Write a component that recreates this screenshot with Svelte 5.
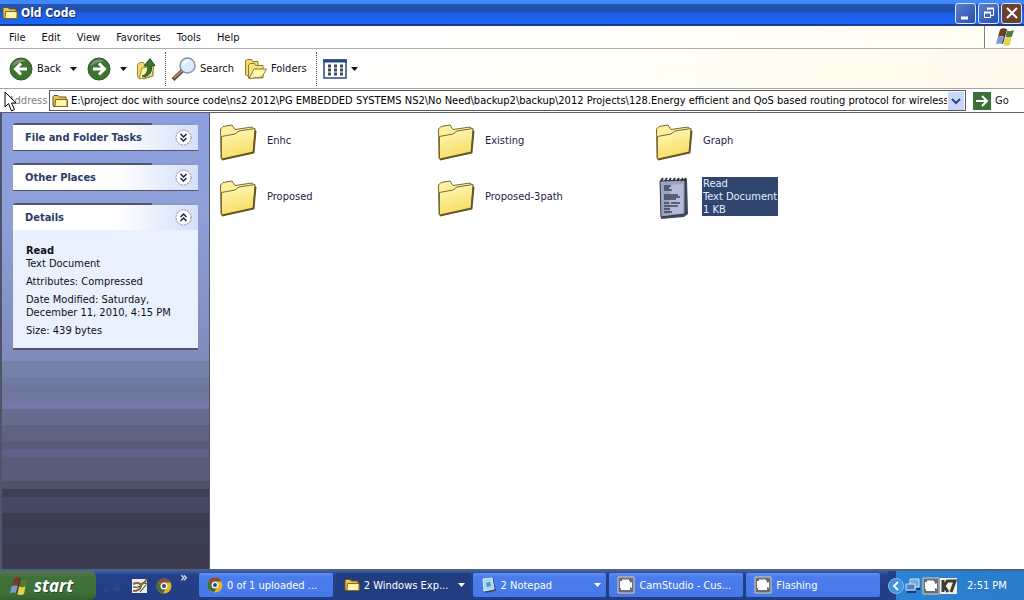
<script>
	const menus = ['File', 'Edit', 'View', 'Favorites', 'Tools', 'Help'];

	const files = [
		{ name: 'Enhc' },
		{ name: 'Existing' },
		{ name: 'Graph' },
		{ name: 'Proposed' },
		{ name: 'Proposed-3path' },
		{ name: 'Read', type: 'Text Document', size: '1 KB' }
	];

	const tasks = [
		{ icon: 'chrome', label: '0 of 1 uploaded ...' },
		{ icon: 'folder', label: '2 Windows Exp...', group: true, active: true },
		{ icon: 'notepad', label: '2 Notepad', group: true },
		{ icon: 'camera', label: 'CamStudio - Cus...' },
		{ icon: 'camera', label: 'Flashing' }
	];

	let selected = $state('Read');
	let address = $state(
		'E:\\project doc with source code\\ns2 2012\\PG EMBEDDED SYSTEMS NS2\\No Need\\backup2\\backup\\2012 Projects\\128.Energy efficient and QoS based routing protocol for wireless sensor networks\\Old Code'
	);
</script>

{#snippet smallFolder(size)}
	<svg width={size} height={size} viewBox="0 0 16 16" aria-hidden="true">
		<path d="M1 13V3.5L2 2.5h4l1.5 1.5H14v3h1.5v6.5H2z" fill="#e9c64c" stroke="#6b5718" />
		<path d="M3.5 6.5H15v7H3z" fill="#fff3a0" stroke="#806b20" />
		<path d="M4.5 9h9.5" stroke="#fffbd8" />
	</svg>
{/snippet}

{#snippet chrome()}
	<svg width="16" height="16" viewBox="0 0 16 16" aria-hidden="true">
		<circle cx="8" cy="8" r="7.5" fill="#e3b42c" />
		<path d="M8 8L1.5 4A7.5 7.5 0 0 1 14.5 4.5H8z" fill="#8f4a30" />
		<path d="M8 8L1.5 4a7.5 7.5 0 0 0 5.5 11.4L10.5 10z" fill="#4c6c3c" />
		<circle cx="8" cy="8" r="3.5" fill="#f3f2e6" />
		<circle cx="8" cy="8" r="2" fill="#2c4a88" />
	</svg>
{/snippet}

{#snippet flag(size)}
	<svg width={size} height={size} viewBox="0 0 20 20" aria-hidden="true">
		<path d="M5 2.5q3-2 6.5-.5L9.5 10Q6.5 8.5 3 10z" fill="#7a3a28" />
		<path d="M12 3.5q3 1.5 7-.5L17 9.5q-3 1.5-6.5.5z" fill="#567a36" />
		<path d="M2.5 10.5q3.5-1.5 6.5-.5L7.5 17q-3-1-6.5.5z" fill="#7f9ad0" />
		<path d="M10 10.5q3 1.5 6.5 0L15 18q-3 1.5-6.5.5z" fill="#e8d048" />
		<path d="M11.5 2L7.5 17" stroke="#38302c" />
	</svg>
{/snippet}

{#snippet arrow(flip)}
	<svg width="24" height="24" viewBox="0 0 24 24" aria-hidden="true">
		<circle cx="12" cy="12" r="11" fill="#3c7430" stroke="#2e5c26" />
		<path d="M3 9a9.5 9.5 0 0 1 14-5q-7 1-14 5z" fill="#84907e" />
		<path
			d={flip ? 'M6 12h11M12 6.5l5.5 5.5-5.5 5.5' : 'M18 12H7M12 6.5L6.5 12l5.5 5.5'}
			fill="none"
			stroke="#fff"
			stroke-width="3"
		/>
	</svg>
{/snippet}

{#snippet caret()}
	<svg width="7" height="4" viewBox="0 0 7 4" aria-hidden="true">
		<path d="M0 0h7L3.5 4z" fill="currentColor" />
	</svg>
{/snippet}

{#snippet chevrons(up)}
	<svg width="17" height="17" viewBox="0 0 17 17" aria-hidden="true">
		<circle cx="8.5" cy="8.5" r="7.5" fill="#fff" stroke="#85899c" stroke-dasharray="2 1" />
		<path
			d={up ? 'M5.5 8l3-3 3 3M5.5 12l3-3 3 3' : 'M5.5 5l3 3 3-3M5.5 9l3 3 3-3'}
			fill="none"
			stroke="#1c2448"
			stroke-width="1.5"
		/>
	</svg>
{/snippet}

<div class="desktop">
	<header class="titlebar">
		{@render smallFolder(16)}
		<h1>Old Code</h1>
		<div class="window-buttons">
			<button aria-label="Minimize">
				<svg width="20" height="20" viewBox="0 0 20 20"><path d="M5 15h7" stroke="#fff" stroke-width="3" /></svg>
			</button>
			<button aria-label="Restore">
				<svg width="20" height="20" viewBox="0 0 20 20" fill="none" stroke="#fff">
					<path d="M8.5 7V5.5h6v7H12" /><path d="M8 5.5h7" stroke-width="2" />
					<path d="M5.5 9.5h6v5h-6z" /><path d="M5 9.5h7" stroke-width="2" />
				</svg>
			</button>
			<button class="close" aria-label="Close">
				<svg width="20" height="20" viewBox="0 0 20 20"><path d="M5 5l10 10M15 5L5 15" stroke="#fff" stroke-width="2" /></svg>
			</button>
		</div>
	</header>

	<div class="menubar">
		<nav>
			{#each menus as menu}
				<button>{menu}</button>
			{/each}
		</nav>
		<div class="brand">{@render flag(20)}</div>
	</div>

	<div class="toolbar">
		<button class="tool">{@render arrow(false)} Back</button>
		<button class="drop" aria-label="Back history">{@render caret()}</button>
		<button class="tool forward" aria-label="Forward">{@render arrow(true)}</button>
		<button class="drop" aria-label="Forward history">{@render caret()}</button>
		<button class="tool up" aria-label="Up">
			<svg width="20" height="24" viewBox="0 0 20 24">
				<path d="M1.5 20V7.5l2-2h4l1 2h9L17 19l-9 3z" fill="#f1d768" stroke="#a08a34" />
				<path d="M3 22L6 11l12-2-2 10z" fill="#fff4a4" stroke="#a08a34" />
				<path d="M6 19q6-1 6-10H8l6-7.5 5 7h-3q0 10-7 11z" fill="#3f7136" stroke="#2a5924" />
			</svg>
		</button>
		<span class="separator"></span>
		<button class="tool">
			<svg width="24" height="24" viewBox="0 0 24 24">
				<path d="M1 22.5L11 13" stroke="#6a4a34" stroke-width="4" />
				<path d="M2 21L10.5 13" stroke="#c09a70" stroke-width="1.5" />
				<circle cx="15.5" cy="8.5" r="7.5" fill="#dcecfb" stroke="#8793ab" stroke-width="1.5" />
				<path d="M11 8q1-4 5-4" fill="none" stroke="#fff" stroke-width="2" />
			</svg>
			Search
		</button>
		<button class="tool folders">
			<svg width="23" height="22" viewBox="0 0 23 22">
				<path d="M1.5 17V2.5l2-1h4l1 2H14V15l-8 4z" fill="#f1dc74" stroke="#8d7b30" />
				<path d="M4.5 20V7l2-1.5h4l1 2H19V20z" fill="#f6e27c" stroke="#8d7b30" />
				<path d="M5 20.5L10 11h12.5L18 19z" fill="#fff5ae" stroke="#8d7b30" />
			</svg>
			Folders
		</button>
		<span class="separator"></span>
		<button class="tool" aria-label="Views">
			<svg width="24" height="20" viewBox="0 0 24 20">
				<path d="M1 1h22v18H1z" fill="#fff" stroke="#24468c" stroke-width="1.5" />
				<path d="M0 2h24" stroke="#24468c" stroke-width="3" />
				<path
					d="M5 7h3M11 7h3M17 7h3M5 11h3M11 11h3M17 11h3M5 15h3M11 15h3M17 15h3"
					stroke="#414a5c"
					stroke-width="3"
				/>
			</svg>
			{@render caret()}
		</button>
	</div>

	<form class="address-bar" onsubmit={(e) => e.preventDefault()}>
		<label for="address">Address</label>
		<div class="address-box">
			{@render smallFolder(16)}
			<input id="address" type="text" spellcheck="false" bind:value={address} />
			<button type="button" aria-label="Show addresses">
				<svg width="16" height="18" viewBox="0 0 16 18"><path d="M4 7l4 4 4-4" fill="none" stroke="#2e4478" stroke-width="2" /></svg>
			</button>
		</div>
		<button class="go">
			<svg width="18" height="18" viewBox="0 0 18 18">
				<path d="M0 0h18v18H0z" fill="#3c7038" />
				<path d="M3 9h11M9 4l5 5-5 5" fill="none" stroke="#fff" stroke-width="2" />
			</svg>
			Go
		</button>
	</form>

	<main>
		<aside>
			<section>
				<h2>File and Folder Tasks <button aria-label="Expand tasks">{@render chevrons(false)}</button></h2>
			</section>
			<section>
				<h2>Other Places <button aria-label="Expand places">{@render chevrons(false)}</button></h2>
			</section>
			<section>
				<h2>Details <button aria-label="Collapse details">{@render chevrons(true)}</button></h2>
				<div class="details">
					<p><strong>Read</strong><br />Text Document</p>
					<p>Attributes: Compressed</p>
					<p>Date Modified: Saturday, December 11, 2010, 4:15 PM</p>
					<p>Size: 439 bytes</p>
				</div>
			</section>
		</aside>

		<div class="files">
			{#each files as file}
				<button class="file" class:selected={selected === file.name} onclick={() => (selected = file.name)}>
					{#if file.type}
						<svg width="38" height="44" viewBox="0 0 38 44" aria-hidden="true">
							<path d="M5 5l27-2 1 35-4 3-23 2z" fill="#444a5c" />
							<path d="M5 5l25-1v34L6 41z" fill="#9aa4c0" stroke="#333849" />
							<path d="M15 9l13-1v29l-13 1z" fill="#b3bdd8" />
							<path
								d="M6 5l2-3m2 3l2-3m2 3l2-3m2 3l2-3m2 3l2-3m2 3l2-3m1 3l2-3"
								stroke="#30343f"
								stroke-width="2"
							/>
							<path
								d="M9 10h7M9 12h5M9 14h8M9 19h14M9 21h16M9 23h12M9 27h5M16 27h9M9 30h14M9 33h6M9 36h8"
								stroke="#3b4258"
								stroke-width="1.5"
							/>
						</svg>
					{:else}
						<svg width="38" height="38" viewBox="0 0 38 38" aria-hidden="true">
							<defs>
								<linearGradient id="folder-front" x1="0" y1="0" x2="0.3" y2="1">
									<stop offset="0" stop-color="#fffbc0" />
									<stop offset="1" stop-color="#f8dc62" />
								</linearGradient>
							</defs>
							<path d="M2 35L1.5 6 4 3.5 13 2l3 4.500L33 4l3.500 3L34 30 3 36.500z" fill="#fff0a0" stroke="#756a34" />
							<path d="M2.5 36V13.500L16 11l4-3 16-2.500-1.500 24L3 36.500z" fill="url(#folder-front)" stroke="#756a34" />
							<path d="M3 36.5l31.500-7L36.500 8" fill="none" stroke="#625828" stroke-width="2" />
						</svg>
					{/if}
					<span class="label">
						{file.name}
						{#if file.type}<br />{file.type}<br />{file.size}{/if}
					</span>
				</button>
			{/each}
		</div>
	</main>

	<footer>
		<button class="start">{@render flag(20)} start</button>
		<div class="quick-launch">
			<button class="dim" aria-label="Show desktop">
				<svg width="20" height="16" viewBox="0 0 20 16"><path d="M1 14l5-4v4zM9 13l7-10 2 10z" fill="#264a84" /></svg>
			</button>
			<button aria-label="Paint">
				<svg width="16" height="16" viewBox="0 0 16 16">
					<path d="M0 1h15v14H0z" fill="#f0eee4" />
					<path d="M1 6q5-2 7 0t7-5M1 13q7 0 8-5t6-2" fill="none" stroke="#7c6838" stroke-width="2" />
					<path d="M1 9q5 1 7-1M8 14l6-7" fill="none" stroke="#2c2a2c" />
				</svg>
			</button>
			<button aria-label="Chrome">{@render chrome()}</button>
			<button class="more" aria-label="More">»</button>
		</div>
		<div class="tasks">
			{#each tasks as task}
				<button class="task" class:active={task.active}>
					{#if task.icon === 'chrome'}
						{@render chrome()}
					{:else if task.icon === 'folder'}
						{@render smallFolder(16)}
					{:else if task.icon === 'notepad'}
						<svg width="16" height="16" viewBox="0 0 16 16" aria-hidden="true">
							<path d="M3 2l9-1 3 13-11 2z" fill="#394864" />
							<path d="M2 2l9-1 2 11-10 2z" fill="#a9d6ee" stroke="#dce9f2" />
							<path d="M5 6l4-1 1 4-4 1z" fill="#4a9ac8" />
						</svg>
					{:else}
						<svg width="18" height="18" viewBox="0 0 18 18" aria-hidden="true">
							<path d="M1 1h16v16H1z" fill="#696d72" stroke="#d5d2c6" />
							<path d="M3 5h10v2l2-1v6l-2-1v3H4v-2H3z" fill="#fff" />
							<path d="M5 4.5h7" stroke="#fff" stroke-width="2" />
						</svg>
					{/if}
					<span>{task.label}</span>
					{#if task.group}{@render caret()}{/if}
				</button>
			{/each}
		</div>
		<div class="tray">
			<button aria-label="Show hidden icons">
				<svg width="16" height="16" viewBox="0 0 16 16">
					<circle cx="8" cy="8" r="7.5" fill="#3f93e4" stroke="#85bcf0" />
					<path d="M10 4L6 8l4 4" fill="none" stroke="#fff" stroke-width="2" />
				</svg>
			</button>
			<svg width="18" height="18" viewBox="0 0 18 18" aria-hidden="true">
				<path d="M6 2h9v8H6z" fill="#6faae4" stroke="#d4e2f2" />
				<path d="M2 7h9v6H2z" fill="#4c82cc" stroke="#d4e2f2" />
				<path d="M3 15h9M12 12h4" stroke="#20386c" stroke-width="2" />
			</svg>
			<svg width="18" height="18" viewBox="0 0 18 18" aria-hidden="true">
				<path d="M1 1h16v16H1z" fill="#696d72" stroke="#d5d2c6" />
				<path d="M3 5h10v2l2-1v6l-2-1v3H4v-2H3z" fill="#fff" />
				<path d="M5 4.5h7" stroke="#fff" stroke-width="2" />
			</svg>
			<svg width="17" height="18" viewBox="0 0 17 18" aria-hidden="true">
				<path d="M0 1h17v16H0z" fill="#f2f0e4" />
				<path d="M3 3v12M8 3L4 9l4 6M8 4h7l-4 11" fill="none" stroke="#403c34" stroke-width="3" />
			</svg>
			<time>2:51 PM</time>
		</div>
	</footer>

	<svg class="pointer" width="14" height="22" viewBox="0 0 14 22" aria-hidden="true">
		<path d="M1 1v15l3.500-3.500L7.500 20l3-1.500L7.500 12H12z" fill="#fff" stroke="#000" />
	</svg>
</div>

<style>
	:global(body) {
		margin: 0;
	}

	.desktop {
		position: relative;
		display: flex;
		flex-direction: column;
		min-height: 100vh;
		font: 11px/13px 'DejaVu Sans Condensed', Tahoma, sans-serif;
		color: #101018;
		background: #fff;
	}

	button {
		display: flex;
		align-items: center;
		padding: 0;
		border: 0;
		background: none;
		font: inherit;
		color: inherit;
		white-space: nowrap;
	}

	svg {
		display: block;
		flex: none;
	}

	/* title bar */
	.titlebar {
		display: flex;
		align-items: center;
		gap: 3px;
		box-sizing: border-box;
		height: 26px;
		padding: 2px 2px 0;
		border-bottom: 2px solid #1b3c84;
		background: linear-gradient(#3f89fb 4px, #2457b4 4px, #2250a8 11px, #1d5de4 13px, #1c66fc 24px);
	}

	h1 {
		flex: 1;
		margin: 0;
		font-size: 12px;
		line-height: 16px;
		color: #fff;
		text-shadow: 1px 1px #102860;
	}

	.window-buttons {
		display: flex;
		gap: 2px;
	}

	.window-buttons button {
		box-sizing: border-box;
		width: 21px;
		height: 21px;
		justify-content: center;
		border: 1px solid #dce6f8;
		border-radius: 3px;
		background: linear-gradient(135deg, #5a80cc, #2850ac);
	}

	.window-buttons .close {
		background: #6c4030;
	}

	/* menu bar */
	.menubar {
		display: flex;
		height: 22px;
		border-bottom: 1px solid #b0b0b0;
		background: linear-gradient(90deg, #fff 40%, #fffef2);
	}

	nav {
		display: flex;
		flex: 1;
		gap: 16px;
		padding-left: 9px;
	}

	.brand {
		display: flex;
		align-items: center;
		justify-content: center;
		width: 39px;
		border-left: 1px solid #808080;
		background: #fff;
	}

	/* toolbar */
	.toolbar {
		display: flex;
		align-items: center;
		height: 39px;
		padding-left: 9px;
		border-bottom: 1px solid #a4a4a4;
		background: linear-gradient(90deg, #fff 30%, #fffdf0 80%, #fff9ee);
	}

	.tool {
		gap: 4px;
	}

	.drop {
		justify-content: center;
		width: 24px;
	}

	.forward {
		margin-left: 2px;
	}

	.up {
		margin-left: 1px;
	}

	.separator {
		height: 34px;
		margin: 0 6px 0 9px;
		border-left: 1px dotted #4c4c4c;
	}

	.folders {
		margin-left: 10px;
	}

	/* address bar */
	.address-bar {
		display: flex;
		align-items: center;
		height: 23px;
		padding-left: 8px;
		background: #fff;
	}

	label {
		width: 41px;
		color: #808080;
	}

	.address-box {
		display: flex;
		flex: 1;
		align-items: center;
		box-sizing: border-box;
		min-width: 0;
		height: 21px;
		padding: 0 1px 0 2px;
		border: 1px solid #585858;
		background: #fff;
	}

	input {
		flex: 1;
		min-width: 0;
		margin: 0 1px 0 3px;
		padding: 0;
		border: 0;
		outline: 0;
		font: inherit;
		color: #000;
	}

	.address-box button {
		background: #c8d6fa;
	}

	.go {
		gap: 4px;
		width: 51px;
		margin-left: 7px;
	}

	/* explorer pane */
	main {
		display: flex;
		flex: 1;
		border-top: 1px solid #606060;
	}

	aside {
		display: flex;
		flex-direction: column;
		gap: 12px;
		box-sizing: border-box;
		width: 210px;
		padding: 10px 11px 10px;
		border: solid #50546a;
		border-width: 0 1px 0 2px;
		background: linear-gradient(
			#8c9ee0 0,
			#8f9fd8 100px,
			#808cbc 240px,
			#7f8ab8 248px,
			#7681a8 248px,
			#7681a8 264px,
			#6f7ba3 264px,
			#6f7ba3 272px,
			#6f769b 272px,
			#6f769b 288px,
			#7378a6 288px,
			#7378a6 296px,
			#666c8e 296px,
			#666c8e 312px,
			#5f6382 312px,
			#5f6382 328px,
			#5a5b79 328px,
			#5a5b79 336px,
			#60618a 336px,
			#60618a 344px,
			#5a5c7b 344px,
			#5a5c7b 368px,
			#4f5268 368px,
			#4f5268 376px,
			#3d4054 376px,
			#3d4054 384px,
			#454862 384px,
			#454862 400px,
			#3d3c50 400px,
			#3d3c50 416px,
			#3b3f53 416px,
			#3b3f53 432px,
			#3e3c50 432px
		);
	}

	/* the top edge fades out under the chevron button */
	section {
		padding-top: 2px;
		border-bottom: 1px solid #50566c;
		border-radius: 3px 3px 0 0;
		background: linear-gradient(90deg, #50566c 75%, #8c9ac8 75%);
	}

	section:last-child {
		border-bottom-width: 2px;
	}

	h2 {
		display: flex;
		align-items: center;
		justify-content: space-between;
		height: 25px;
		margin: 0;
		padding: 0 6px 0 12px;
		font-size: 11px;
		color: #2c3c68;
		background: linear-gradient(90deg, #fff 55%, #d4dffa);
	}

	.details {
		padding: 14px 12px 11px 13px;
		background: #e9f0fe;
	}

	p {
		margin: 0 0 5px;
	}

	p:last-child {
		margin: 0;
	}

	/* file list */
	.files {
		display: grid;
		flex: 1;
		grid-template-columns: repeat(auto-fill, 218px);
		grid-auto-rows: 56px;
		align-content: start;
		padding: 1px 0 0 9px;
	}

	.file {
		gap: 9px;
		text-align: left;
		color: #1c1c48;
	}

	.label {
		padding: 0 1px;
		margin-bottom: 4px;
	}

	.selected .label {
		color: #e4ecff;
		background: #30466f;
	}

	/* taskbar */
	footer {
		display: flex;
		box-sizing: border-box;
		height: 31px;
		border-top: 2px solid #4a6488;
		color: #fff;
		background: linear-gradient(#3c5ea4, #24408a 4px, #213e84);
	}

	.start {
		gap: 5px;
		box-sizing: border-box;
		width: 96px;
		padding-left: 9px;
		border-radius: 0 6px 6px 0;
		background: linear-gradient(#5c7452, #41713a 6px, #3c7036 22px, #33602e);
		font: italic bold 17px/20px 'Open Sans', sans-serif;
		text-shadow: 1px 1px #284c24;
	}

	.quick-launch {
		display: flex;
		gap: 8px;
		width: 97px;
		padding-left: 6px;
	}

	.dim {
		margin-right: 2px;
	}

	.more {
		align-items: start;
		font-size: 14px;
	}

	.tasks {
		display: flex;
		flex: 1;
		gap: 3px;
		padding: 2px 8px 3px 0;
	}

	.task {
		flex: 1;
		gap: 4px;
		min-width: 0;
		padding: 0 5px 0 8px;
		border-radius: 2px;
		background: linear-gradient(#5f90f4, #4a7cec 4px, #4878e8);
	}

	.task.active {
		background: #213d80;
	}

	.task span {
		flex: 1;
		overflow: hidden;
		text-align: left;
	}

	.tray {
		display: flex;
		align-items: center;
		width: 136px;
		background: linear-gradient(90deg, #24408a 8px, #2a84d4 8px, #2b7cc8);
	}

	time {
		margin-left: 10px;
	}

	.pointer {
		position: absolute;
		top: 91px;
		left: 4px;
	}
</style>
